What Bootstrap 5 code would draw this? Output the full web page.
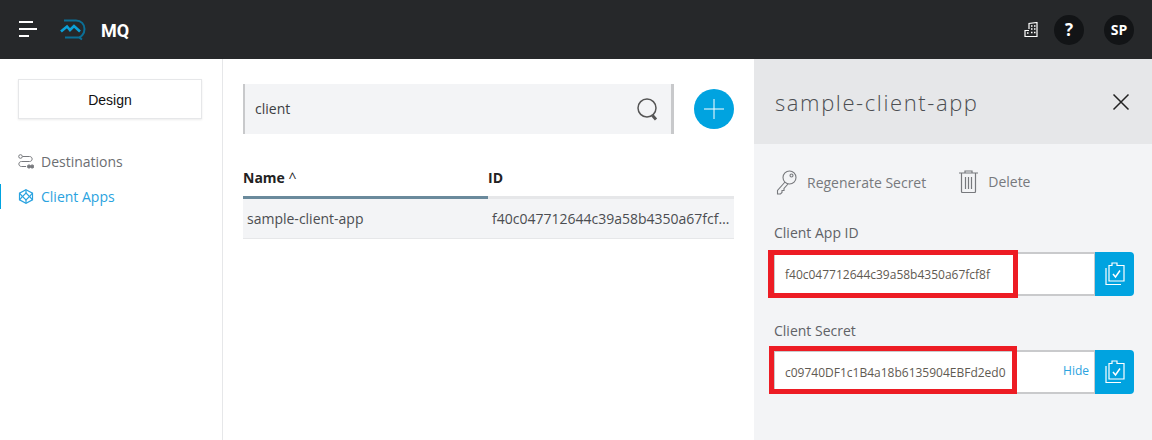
<!DOCTYPE html>
<html lang="en">
<head>
<meta charset="utf-8">
<title>MQ</title>
<link href="https://cdn.jsdelivr.net/npm/bootstrap@5.3.0/dist/css/bootstrap.min.css" rel="stylesheet">
<style>
html,body{height:440px;overflow:hidden;background:#fff;font-family:"Open Sans",sans-serif;}
.topbar{height:59px;background:#26282a;padding:0 18px 0 19px;}
.logo-word{font-family:"Roboto",sans-serif;font-weight:700;font-size:18px;color:#fff;margin-left:15px;line-height:1;padding-top:2px;}
.brand-mark{margin-left:21px;}
.round-ico{width:30px;height:30px;border-radius:50%;background:#121416;color:#fff;font-weight:700;font-size:14px;}
.round-ico.q{font-size:17px;margin-left:16px;}
.round-ico.u{margin-left:20px;}
.work{height:381px;}
.sidenav{width:223px;border-right:1px solid #e6e7e9;padding:20px 0 0 0;}
.design-box{width:184px;height:40px;margin-left:18px;border:1px solid #e6e7e9;box-shadow:0 1px 2px rgba(0,0,0,.08);font-family:"Liberation Sans",sans-serif;font-size:14px;color:#111;border-radius:0;background:#fff;padding:2px 0 0 0;}
.nav-entry{height:25px;padding-left:18px;font-size:14px;color:#6c6e72;gap:7px;border-left:0;}
.nav-first{margin-top:30px;}
.nav-second{margin-top:10px;color:#2aa3e0;box-shadow:inset 1px 0 0 #00a3e0;}
.centre{width:531px;padding:25px 20px 0 20px;}
.search-box{width:431px;height:50px;background:#f3f4f6;border-left:2px solid #c8c9cb;border-right:3px solid #c8c9cb;padding:0 13px 2px 10px;font-size:14px;color:#3c3e42;}
.search-box svg{position:relative;top:1px;}
.add-round{width:40px;height:40px;border-radius:50%;background:#00a3e0;border:0;padding:0;margin-left:20px;}
.head-row{margin-top:31px;height:34px;border-bottom:3px solid #e6e7e9;position:relative;font-weight:700;font-size:14px;color:#222;}
.head-row .name-col{width:245px;height:34px;margin-bottom:-3px;border-bottom:3px solid #6a8a9c;padding-top:2px;}
.head-row .id-col{padding-top:2px;}
.body-row{height:40px;background:#f3f4f6;border-bottom:1px solid #e6e7e9;font-size:14px;color:#4b4d51;}
.body-row .name-col{width:245px;padding-left:4px;}
.body-row .id-col{width:246px;padding:0 4px;white-space:nowrap;overflow:hidden;text-overflow:ellipsis;}
.sidepanel{width:398px;background:#f3f4f6;}
.panel-head{height:85px;background:#e6e7e9;padding:0 22px 0 21px;}
.panel-title{font-size:22px;font-weight:300;letter-spacing:1.6px;color:#4c4e52;margin:2px 0 0 0;}
.act-row{padding:26px 0 0 22px;height:79px;font-size:14px;color:#77797d;}
.act-row span{margin-left:10px;}
.act-del{margin-left:33px;}
.field-label{font-size:14px;color:#606266;margin:0 0 9px 20px;line-height:20px;}
.field-wrap{position:relative;height:44px;margin:0 18px 25px 19px;}
.value-box{flex:1;height:44px;background:#fff;border:2px solid #c9cacc;border-right-width:1px;font-size:12px;color:#5f5a52;padding:1px 0 0 10px;}
.copy-btn{width:39px;height:44px;background:#00a3e0;border:0;border-radius:0 4px 4px 0;padding:0;}
.hide-link{font-size:12px;color:#2aa3e0;text-decoration:none;margin-left:auto;margin-right:5px;position:relative;top:-2px;}
.redmark{position:absolute;border:5px solid #ed1c24;pointer-events:none;}
.rm1{left:-5px;top:-2px;width:250px;height:48px;border-left-width:6px;}
.rm2{left:-4px;top:-4px;width:248px;height:48px;}
</style>
</head>
<body>
<nav class="topbar d-flex align-items-center">
  <svg width="20" height="17" viewBox="0 0 20 17"><path d="M0 1h14M0 8h18M0 15h10" stroke="#fff" stroke-width="2" fill="none"/></svg>
  <svg class="brand-mark" width="26" height="23" viewBox="0 0 26 23" fill="none"><path d="M4 2.500H16C21 2.500 24.500 6 24.500 11S21 19 19 19.500L22 21.500M19 19.500H5" stroke="#0b6f96" stroke-width="2"/><path d="M1 13.500L7 8.500L10 12L14 8L20 13.500" stroke="#0ba0d8" stroke-width="2.600"/></svg>
  <span class="logo-word">MQ</span>
  <div class="ms-auto d-flex align-items-center">
    <svg width="14" height="15" viewBox="0 0 14 15" fill="none"><path d="M5 7V1.500L13 .5V14.500H1V8.500H5" stroke="#fff" stroke-width="1.200"/><path d="M7 4h1.500M10 4h1.500M7 7h1.500M10 7h1.500M3 11h1.500M7 10.500h1.500M10 10.500h1.500" stroke="#fff" stroke-width="1.500"/></svg>
    <div class="round-ico q d-flex align-items-center justify-content-center">?</div>
    <div class="round-ico u d-flex align-items-center justify-content-center">SP</div>
  </div>
</nav>
<div class="work d-flex">
  <aside class="sidenav flex-shrink-0">
    <button class="design-box btn d-flex align-items-center justify-content-center">Design</button>
    <div class="nav-entry nav-first d-flex align-items-center">
      <svg width="16" height="15" viewBox="0 0 16 15" fill="none" stroke="#77797d" stroke-width="1"><circle cx="2.500" cy="2.500" r="1.800"/><path d="M4.500 2.500H11.500C15 2.500 15 7.500 11.500 7.500H3.500C0 7.500 0 12.500 3.500 12.500H8"/><circle cx="11" cy="12.500" r="1.600" fill="#77797d"/><circle cx="14.200" cy="12.500" r="1.600" fill="#77797d"/></svg>
      <span>Destinations</span>
    </div>
    <div class="nav-entry nav-second d-flex align-items-center">
      <svg width="16" height="15" viewBox="0 0 16 15" fill="none" stroke="#2aa3e0" stroke-width="1.200"><path d="M8 .8L14.500 4.200V10.800L8 14.200L1.500 10.800V4.200Z"/><path d="M8 4L11.500 7.500L8 11L4.500 7.500Z"/><path d="M1.500 4.200L4.500 7.500L1.500 10.800M14.500 4.200L11.500 7.500L14.500 10.800M8 .8V4M8 11V14.200"/></svg>
      <span>Client Apps</span>
    </div>
  </aside>
  <main class="centre flex-shrink-0">
    <div class="d-flex align-items-center">
      <div class="search-box d-flex align-items-center justify-content-between">
        <span>client</span>
        <svg width="21" height="23" viewBox="0 0 21 23" fill="none"><circle cx="10" cy="10" r="9" stroke="#555" stroke-width="1.500"/><path d="M15.500 17.500L19 21.500" stroke="#555" stroke-width="3"/></svg>
      </div>
      <button class="add-round d-flex align-items-center justify-content-center" aria-label="Add">
        <svg width="20" height="20" viewBox="0 0 20 20"><path d="M10 0V20M0 10H20" stroke="#fff" stroke-width="1"/></svg>
      </button>
    </div>
    <div class="head-row d-flex">
      <div class="name-col">Name <span class="fw-normal">^</span></div>
      <div class="id-col">ID</div>
    </div>
    <div class="body-row d-flex align-items-center">
      <div class="name-col">sample-client-app</div>
      <div class="id-col">f40c047712644c39a58b4350a67fcf8f</div>
    </div>
  </main>
  <section class="sidepanel flex-shrink-0">
    <div class="panel-head d-flex align-items-center justify-content-between">
      <h1 class="panel-title">sample-client-app</h1>
      <svg width="18" height="18" viewBox="0 0 18 18"><path d="M1.500 1.500L16.500 16.500M16.500 1.500L1.500 16.500" stroke="#222" stroke-width="1.500"/></svg>
    </div>
    <div class="act-row d-flex align-items-start">
      <div class="d-flex align-items-center">
        <svg width="21" height="25" viewBox="0 0 21 25" fill="none" stroke="#77797d" stroke-width="1.100"><circle cx="13.500" cy="7.500" r="6.500"/><circle cx="15.500" cy="5.500" r="1.500"/><path d="M9 12L1.500 20.500V24H4.500L6 22.500V20.500H8V18.500L12 14"/></svg>
        <span>Regenerate Secret</span>
      </div>
      <div class="act-del d-flex align-items-center">
        <svg width="19" height="23" viewBox="0 0 19 23" fill="none" stroke="#77797d" stroke-width="1.200"><path d="M0 3H19M6 3V1H13V3M2.500 3V21.500C2.500 22 3 22.500 3.500 22.500H15.500C16 22.500 16.500 22 16.500 21.500V3"/><path d="M6.500 7V19M9.500 7V19M12.500 7V19"/></svg>
        <span>Delete</span>
      </div>
    </div>
    <div class="field-label">Client App ID</div>
    <div class="field-wrap d-flex">
      <div class="value-box d-flex align-items-center">f40c047712644c39a58b4350a67fcf8f</div>
      <button class="copy-btn d-flex align-items-center justify-content-center" aria-label="Copy">
        <svg width="20" height="24" viewBox="0 0 20 24" fill="none" stroke="#fff" stroke-width="1.200"><path d="M4 3.500H7V1H12V3.500H19V19H4Z"/><path d="M1 6V22.500H16"/><path d="M8 12L10.500 15L15 8.500" stroke-width="1.500"/></svg>
      </button>
      <div class="redmark rm1"></div>
    </div>
    <div class="field-label">Client Secret</div>
    <div class="field-wrap d-flex">
      <div class="value-box d-flex align-items-center">c09740DF1c1B4a18b6135904EBFd2ed0<a class="hide-link" href="#">Hide</a></div>
      <button class="copy-btn d-flex align-items-center justify-content-center" aria-label="Copy">
        <svg width="20" height="24" viewBox="0 0 20 24" fill="none" stroke="#fff" stroke-width="1.200"><path d="M4 3.500H7V1H12V3.500H19V19H4Z"/><path d="M1 6V22.500H16"/><path d="M8 12L10.500 15L15 8.500" stroke-width="1.500"/></svg>
      </button>
      <div class="redmark rm2"></div>
    </div>
  </section>
</div>
</body>
</html>
